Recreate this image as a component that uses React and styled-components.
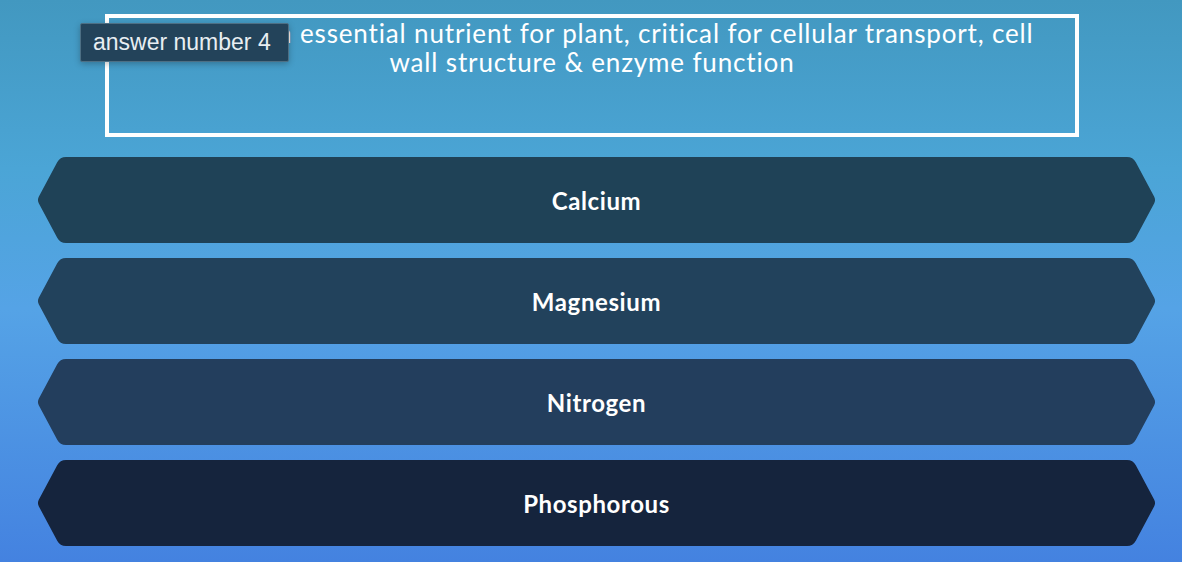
import React from 'react';
import styled, { createGlobalStyle } from 'styled-components';

const GlobalStyle = createGlobalStyle`
  html, body {
    margin: 0;
    padding: 0;
  }
  body {
    font-family: Lato, 'Open Sans', sans-serif;
  }
`;

const Page = styled.div`
  position: relative;
  width: 1182px;
  height: 562px;
  overflow: hidden;
  box-sizing: border-box;
  padding-top: 14px;
  display: flex;
  flex-direction: column;
  background: linear-gradient(180deg, #4298c0 0%, #4ba5d6 30%, #55a3e6 55%, #4482e0 100%);
`;

const QuestionBox = styled.div`
  box-sizing: border-box;
  width: 974px;
  height: 123px;
  margin-left: 105px;
  padding: 1px 25px 0;
  border: 4px solid #ffffff;
  color: #ffffff;
  font-family: Lato, sans-serif;
  font-size: 26px;
  line-height: 29px;
  letter-spacing: 0.85px;
  font-variant-ligatures: none;
  text-align: center;
`;

const Tooltip = styled.div`
  position: absolute;
  left: 80px;
  top: 23px;
  box-sizing: border-box;
  width: 209px;
  height: 39px;
  padding-left: 12px;
  display: flex;
  align-items: center;
  background: #23435a;
  border: 1px solid #4d6f84;
  border-radius: 2px;
  box-shadow: 0 2px 6px rgba(0, 0, 0, 0.25);
  color: #e8eef2;
  font-family: 'Liberation Sans', Arial, sans-serif;
  font-size: 23px;
  white-space: nowrap;
`;

const Options = styled.div`
  display: flex;
  flex-direction: column;
  gap: 15px;
  margin-top: 20px;
  margin-left: 37px;
`;

const hexPath =
  "path('M 29 0 H 1090 Q 1096 0 1098.8 5.3 L 1117.1 39.5 Q 1119 43 1117.1 46.5 L 1098.8 80.7 Q 1096 86 1090 86 H 29 Q 23 86 20.2 80.7 L 1.9 46.5 Q 0 43 1.9 39.5 L 20.2 5.3 Q 23 0 29 0 Z')";

const Option = styled.button`
  width: 1119px;
  height: 86px;
  border: none;
  padding: 0;
  display: flex;
  align-items: center;
  justify-content: center;
  background: ${(props) => props.color};
  clip-path: ${hexPath};
  color: #ffffff;
  font-family: Lato, sans-serif;
  font-weight: 700;
  font-size: 24px;
  letter-spacing: 0.6px;
  cursor: pointer;
`;

const answers = [
  { label: 'Calcium', color: '#1f4257' },
  { label: 'Magnesium', color: '#22425c' },
  { label: 'Nitrogen', color: '#233e5d' },
  { label: 'Phosphorous', color: '#15243d' },
];

const App = () => {
  return (
    <>
      <GlobalStyle />
      <Page>
        <QuestionBox>
          Which is an essential nutrient for plant, critical for cellular
          transport, cell wall structure &amp; enzyme function
        </QuestionBox>
        <Options>
          {answers.map((a) => (
            <Option key={a.label} color={a.color}>
              {a.label}
            </Option>
          ))}
        </Options>
        <Tooltip>answer number 4</Tooltip>
      </Page>
    </>
  );
};

export default App;
